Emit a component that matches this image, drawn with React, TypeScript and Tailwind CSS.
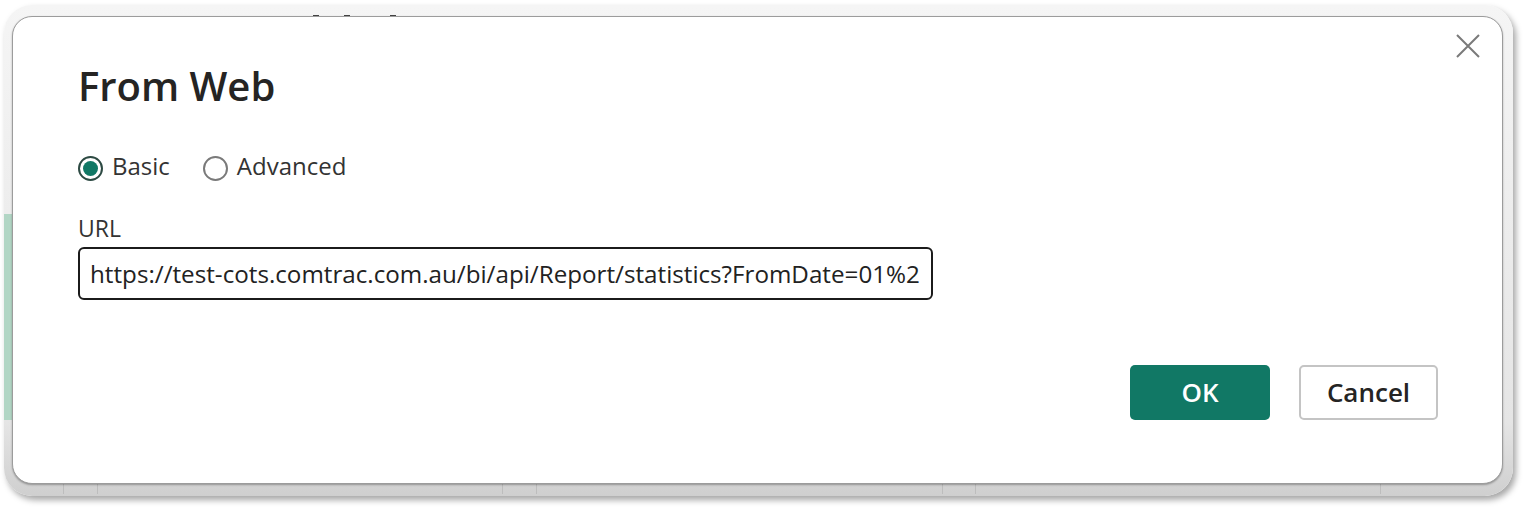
import { useState } from 'react';

const GRID_LINES = [59, 93, 498, 532, 938, 971, 1376];
const TOP_TICKS = [309, 340, 386];

function Radio({ checked, label, onSelect }: { checked: boolean; label: string; onSelect: () => void }) {
  return (
    <button type="button" onClick={onSelect} className="flex items-center gap-[9px] cursor-pointer">
      {checked ? (
        <span className="w-[25px] h-[25px] rounded-full border-2 border-[#2d4a43] flex items-center justify-center mt-[5px]">
          <span className="w-[15px] h-[15px] rounded-full bg-[#117865]" />
        </span>
      ) : (
        <span className="w-[25px] h-[25px] rounded-full border-2 border-[#7a7a7a] mt-[5px]" />
      )}
      <span className="text-[24px] leading-[32px] text-[#333]">{label}</span>
    </button>
  );
}

export default function App() {
  const [mode, setMode] = useState<'basic' | 'advanced'>('basic');
  const [url, setUrl] = useState(
    'https://test-cots.comtrac.com.au/bi/api/Report/statistics?FromDate=01%2F01%2F2023&ToDate=31%2F12%2F2023'
  );

  return (
    <div className="w-[1528px] h-[508px] bg-white pt-[5px] pl-[4px]" style={{ fontFamily: '"Open Sans", "Noto Sans", sans-serif' }}>
      {/* greyed-out app behind the modal */}
      <div className="relative w-[1509px] h-[491px] rounded-[28px] bg-linear-to-b from-[#f5f5f5] via-[#e5e5e5] via-85% to-[#cfcfcf] shadow-[3px_4px_6px_rgba(0,0,0,0.35)] pt-[11px] pl-[8px] pr-[10px] pb-[12px] flex">
        <div className="absolute left-0 top-[209px] w-[8px] h-[206px] bg-[#b2d6c5]" />
        {GRID_LINES.map((x) => (
          <div key={x} className="absolute bottom-[2px] h-[12px] w-px bg-[#bdbdbd]" style={{ left: x }} />
        ))}
        {TOP_TICKS.map((x) => (
          <div key={x} className="absolute top-[10px] h-[2px] w-[6px] bg-[#444]" style={{ left: x }} />
        ))}

        {/* dialog */}
        <div className="relative flex-1 bg-white rounded-[20px] border border-[#9c9c9c] shadow-[0_1px_2px_rgba(0,0,0,0.3)] pl-[65px] pr-[64px] pt-[45px] flex flex-col">
          <button type="button" className="absolute right-[22px] top-[17px] w-[24px] h-[24px] cursor-pointer">
            <svg viewBox="0 0 24 24" className="w-[24px] h-[24px]" fill="none" stroke="#7a7a7a" strokeWidth="2">
              <path d="M1 1 L23 23 M23 1 L1 23" />
            </svg>
          </button>

          <h1 className="text-[40px] leading-[48px] font-semibold text-[#252423]">From Web</h1>

          <div className="flex items-center gap-[33px] mt-[40px]">
            <Radio checked={mode === 'basic'} label="Basic" onSelect={() => setMode('basic')} />
            <Radio checked={mode === 'advanced'} label="Advanced" onSelect={() => setMode('advanced')} />
          </div>

          <label className="mt-[32px] text-[23px] leading-[28px] text-[#333]">URL</label>
          <input
            value={url}
            onChange={(e) => setUrl(e.target.value)}
            className="mt-[5px] w-[855px] h-[53px] border-2 border-[#1b1b1b] rounded-[6px] px-[10px] text-[24.2px] text-[#222] outline-none"
          />

          <div className="flex justify-end gap-[29px] mt-[65px]">
            <button type="button" className="w-[140px] h-[55px] rounded-[5px] bg-[#117865] text-white text-[26px] font-semibold">
              OK
            </button>
            <button type="button" className="w-[139px] h-[55px] rounded-[5px] bg-white border-2 border-[#c4c4c4] text-[#252423] text-[26px] font-semibold">
              Cancel
            </button>
          </div>
        </div>
      </div>
    </div>
  );
}
